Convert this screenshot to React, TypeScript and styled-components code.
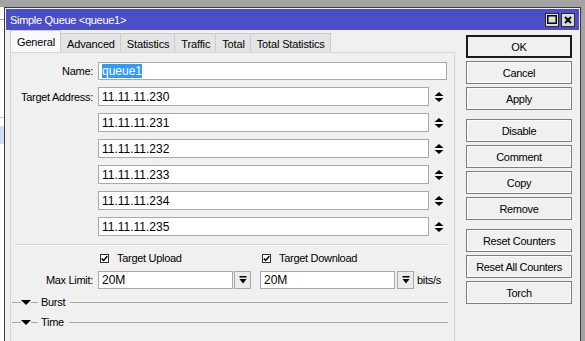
import React from "react";
import styled, { createGlobalStyle } from "styled-components";

const GlobalStyle = createGlobalStyle`
  html, body { margin: 0; padding: 0; background: #a3a3a3; overflow: hidden; }
  body {
    font-family: "Liberation Sans", Arial, sans-serif;
    font-size: 11px;
    letter-spacing: -0.3px;
    color: #000;
  }
  * { box-sizing: border-box; }
`;

const Desktop = styled.div`
  display: flex;
  width: 585px;
  height: 341px;
  overflow: hidden;
`;

const BackApp = styled.div`
  width: 4px;
  margin-top: 7px;
  background: #fdfdfd;
  display: flex;
  flex-direction: column;
  flex-shrink: 0;
`;

const BackLine = styled.div<{ $top: number; $h: number; $c: string }>`
  margin-top: ${(p) => p.$top}px;
  height: ${(p) => p.$h}px;
  background: ${(p) => p.$c};
`;

const Window = styled.div`
  width: 577px;
  height: 350px;
  margin-top: 7px;
  flex-shrink: 0;
  border: 1px solid #3a3a3a;
  border-bottom: none;
  background: #f0f0f0;
  padding: 1px 1px 0;
  display: flex;
  flex-direction: column;
`;

const TitleBar = styled.div`
  height: 21px;
  background: #4a4fc8;
  color: #fff;
  display: flex;
  align-items: center;
  padding: 0 4px 0 4px;
  flex-shrink: 0;
`;

const TitleText = styled.div`
  flex: 1;
  font-size: 11px;
`;

const TitleButton = styled.div`
  width: 14px;
  height: 14px;
  margin-left: 2px;
  background: #dcdcdc;
  border: 1px solid #2a2a2a;
  display: flex;
  align-items: center;
  justify-content: center;
`;

const Content = styled.div`
  flex: 1;
  display: flex;
  padding-left: 4px;
`;

const LeftColumn = styled.div`
  width: 445px;
  display: flex;
  flex-direction: column;
`;

const TabRow = styled.div`
  height: 22px;
  display: flex;
  align-items: flex-end;
  flex-shrink: 0;
`;

const Tab = styled.div<{ $active?: boolean; $last?: boolean }>`
  height: ${(p) => (p.$active ? 22 : 19)}px;
  padding: 0 5px 0 6px;
  letter-spacing: -0.15px;
  display: flex;
  align-items: center;
  background: ${(p) => (p.$active ? "#f9f9f9" : "#e4e4e4")};
  border-top: 1px solid #cbcbcb;
  border-left: 1px solid #cbcbcb;
  border-right: ${(p) => (p.$last || p.$active ? "1px solid #cbcbcb" : "none")};
  margin-right: ${(p) => (p.$active ? -1 : 0)}px;
  position: relative;
  z-index: ${(p) => (p.$active ? 1 : 0)};
  padding-top: ${(p) => (p.$active ? 0 : 1)}px;
`;

const Panel = styled.div`
  flex: 1;
  border: 1px solid #d6d6d6;
  border-bottom: none;
  background: #f0f0f0;
  padding-top: 9px;
  display: flex;
  flex-direction: column;
`;

const Rows = styled.div`
  display: flex;
  flex-direction: column;
  gap: 7px;
`;

const FieldRow = styled.div<{ $h: number }>`
  height: ${(p) => p.$h}px;
  display: flex;
  align-items: center;
`;

const Label = styled.div`
  width: 82px;
  text-align: right;
  flex-shrink: 0;
`;

const TextBox = styled.div<{ $w: number; $ml?: number }>`
  width: ${(p) => p.$w}px;
  height: 100%;
  margin-left: ${(p) => p.$ml ?? 5}px;
  background: #fff;
  border: 1px solid #a9a9a9;
  font-size: 12px;
  letter-spacing: 0;
  padding-left: 3px;
  display: flex;
  align-items: center;
  flex-shrink: 0;
  white-space: nowrap;
`;

const Selected = styled.span`
  background: #3399ff;
  color: #fff;
  line-height: 14px;
`;

const Spinner = styled.div`
  margin-left: 5px;
  width: 10px;
  display: flex;
  align-items: center;
`;

const Separator = styled.div`
  height: 2px;
  margin: 8px 7px 0 4px;
  border-top: 1px solid #d4d4d4;
  border-bottom: 1px solid #fbfbfb;
`;

const CheckRow = styled.div`
  height: 14px;
  margin-top: 5px;
  display: flex;
  align-items: center;
  padding-left: 87px;
`;

const CheckCell = styled.div<{ $w?: number }>`
  width: ${(p) => (p.$w ? `${p.$w}px` : "auto")};
  display: flex;
  align-items: center;
  padding-left: 2px;
`;

const CheckBox = styled.div`
  width: 9px;
  height: 9px;
  border: 1px solid #333;
  background: #fff;
  margin-right: 8px;
  display: flex;
  align-items: center;
  justify-content: center;
`;

const LimitRow = styled(FieldRow)`
  margin-top: 6px;
`;

const DropButton = styled.div<{ $ml: number }>`
  width: 17px;
  height: 100%;
  margin-left: ${(p) => p.$ml}px;
  border: 1px solid #a9a9a9;
  background: #ececec;
  display: flex;
  align-items: center;
  justify-content: center;
  flex-shrink: 0;
`;

const Unit = styled.div`
  margin-left: 3px;
`;

const Expander = styled.div<{ $first?: boolean }>`
  height: 20px;
  margin-top: ${(p) => (p.$first ? 3 : 0)}px;
  display: flex;
  align-items: center;
  padding-left: 1px;
  margin-right: 6px;
`;

const ExpLine = styled.div<{ $w?: number }>`
  height: 1px;
  background: #a8a8a8;
  ${(p) => (p.$w ? `width: ${p.$w}px;` : "flex: 1;")}
`;

const ExpLabel = styled.div`
  padding: 0 5px 0 3px;
`;

const RightColumn = styled.div`
  width: 106px;
  margin-left: 11px;
  padding-top: 5px;
  display: flex;
  flex-direction: column;
`;

const Button = styled.div<{ $default?: boolean; $gapTop?: number }>`
  height: 23px;
  margin-top: ${(p) => p.$gapTop ?? 3}px;
  border: ${(p) => (p.$default ? "2px solid #1c1c1c" : "1px solid #7d7d7d")};
  box-shadow: ${(p) => (p.$default ? "none" : "inset 0 0 0 1px #fafafa")};
  background: #f0f0f0;
  display: flex;
  align-items: center;
  justify-content: center;
`;

const SpinIcon = () => (
  <svg width="10" height="10" viewBox="0 0 10 10">
    <polygon points="5,0 9.5,4 0.5,4" fill="#000" />
    <polygon points="0.5,6 9.5,6 5,10" fill="#000" />
  </svg>
);

const DropIcon = () => (
  <svg width="8" height="8" viewBox="0 0 8 8">
    <rect x="0.5" y="0" width="7" height="1.5" fill="#000" />
    <polygon points="0.5,3 7.5,3 4,7.5" fill="#000" />
  </svg>
);

const Check = () => (
  <svg width="7" height="7" viewBox="0 0 7 7">
    <path d="M0.8 3.6 L2.7 5.5 L6.3 1.2" stroke="#000" strokeWidth="1.5" fill="none" />
  </svg>
);

const Triangle = () => (
  <svg width="10" height="5" viewBox="0 0 10 5">
    <polygon points="0,0 10,0 5,5" fill="#000" />
  </svg>
);

const targets = [
  "11.11.11.230",
  "11.11.11.231",
  "11.11.11.232",
  "11.11.11.233",
  "11.11.11.234",
  "11.11.11.235",
];

const tabs = ["General", "Advanced", "Statistics", "Traffic", "Total", "Total Statistics"];

export default function App() {
  return (
    <>
      <GlobalStyle />
      <Desktop>
        <BackApp>
          <BackLine $top={12} $h={1} $c="#9a9a9a" />
          <BackLine $top={97} $h={1} $c="#c4c4c4" />
          <BackLine $top={8} $h={18} $c="#cfe0f5" />
        </BackApp>
        <Window>
          <TitleBar>
            <TitleText>Simple Queue &lt;queue1&gt;</TitleText>
            <TitleButton>
              <svg width="10" height="9" viewBox="0 0 10 9">
                <rect x="0.75" y="0.75" width="8.5" height="7.5" fill="none" stroke="#000" strokeWidth="1.5" />
              </svg>
            </TitleButton>
            <TitleButton>
              <svg width="8" height="8" viewBox="0 0 8 8">
                <path d="M1 1 L7 7 M7 1 L1 7" stroke="#000" strokeWidth="2" />
              </svg>
            </TitleButton>
          </TitleBar>
          <Content>
            <LeftColumn>
              <TabRow>
                {tabs.map((t, i) => (
                  <Tab key={t} $active={i === 0} $last={i === tabs.length - 1}>
                    {t}
                  </Tab>
                ))}
              </TabRow>
              <Panel>
                <Rows>
                  <FieldRow $h={18}>
                    <Label>Name:</Label>
                    <TextBox $w={349}>
                      <Selected>queue1</Selected>
                    </TextBox>
                  </FieldRow>
                  {targets.map((t, i) => (
                    <FieldRow $h={19} key={t}>
                      <Label>{i === 0 ? "Target Address:" : ""}</Label>
                      <TextBox $w={331}>{t}</TextBox>
                      <Spinner>
                        <SpinIcon />
                      </Spinner>
                    </FieldRow>
                  ))}
                </Rows>
                <Separator />
                <CheckRow>
                  <CheckCell $w={162}>
                    <CheckBox>
                      <Check />
                    </CheckBox>
                    Target Upload
                  </CheckCell>
                  <CheckCell>
                    <CheckBox>
                      <Check />
                    </CheckBox>
                    Target Download
                  </CheckCell>
                </CheckRow>
                <LimitRow $h={18}>
                  <Label>Max Limit:</Label>
                  <TextBox $w={135}>20M</TextBox>
                  <DropButton $ml={1}>
                    <DropIcon />
                  </DropButton>
                  <TextBox $w={135} $ml={9}>20M</TextBox>
                  <DropButton $ml={2}>
                    <DropIcon />
                  </DropButton>
                  <Unit>bits/s</Unit>
                </LimitRow>
                <Expander $first>
                  <ExpLine $w={9} />
                  <Triangle />
                  <ExpLine $w={7} />
                  <ExpLabel>Burst</ExpLabel>
                  <ExpLine />
                </Expander>
                <Expander>
                  <ExpLine $w={9} />
                  <Triangle />
                  <ExpLine $w={7} />
                  <ExpLabel>Time</ExpLabel>
                  <ExpLine />
                </Expander>
              </Panel>
            </LeftColumn>
            <RightColumn>
              <Button $default $gapTop={0}>OK</Button>
              <Button>Cancel</Button>
              <Button>Apply</Button>
              <Button $gapTop={9}>Disable</Button>
              <Button>Comment</Button>
              <Button>Copy</Button>
              <Button>Remove</Button>
              <Button $gapTop={9}>Reset Counters</Button>
              <Button>Reset All Counters</Button>
              <Button>Torch</Button>
            </RightColumn>
          </Content>
        </Window>
      </Desktop>
    </>
  );
}
